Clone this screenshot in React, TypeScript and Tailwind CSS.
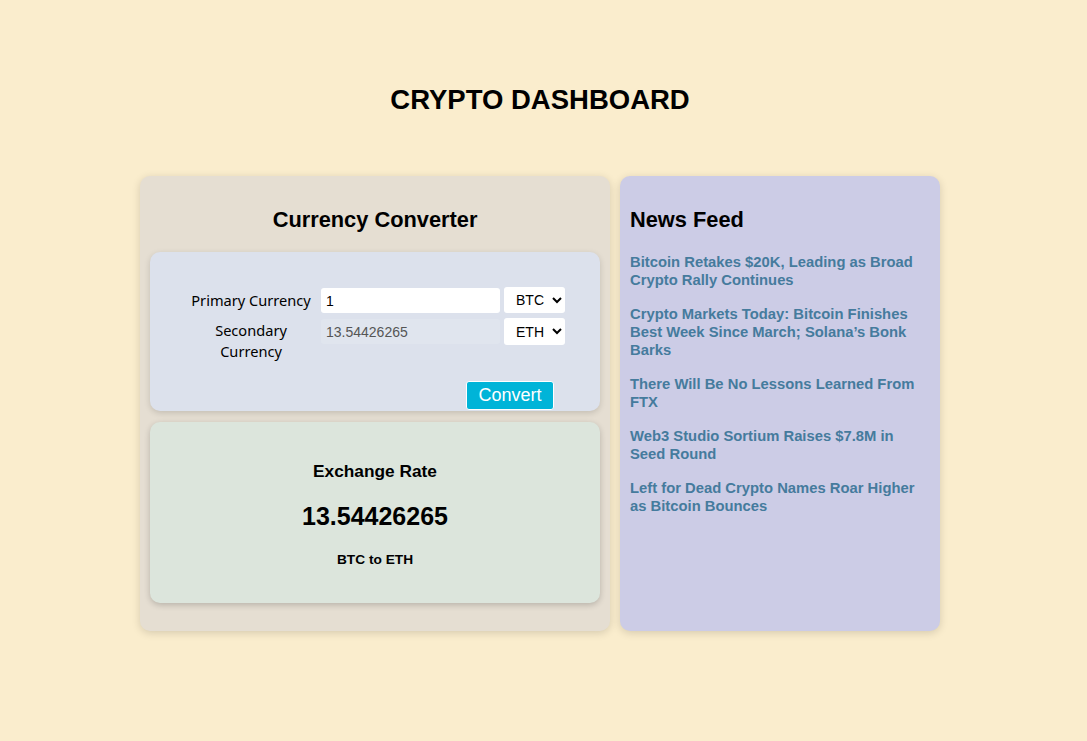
import React, { useState } from 'react'

const heading = "font-['Liberation_Sans','Arial',sans-serif] font-bold"

const news = [
  'Bitcoin Retakes $20K, Leading as Broad Crypto Rally Continues',
  'Crypto Markets Today: Bitcoin Finishes Best Week Since March; Solana’s Bonk Barks',
  'There Will Be No Lessons Learned From FTX',
  'Web3 Studio Sortium Raises $7.8M in Seed Round',
  'Left for Dead Crypto Names Roar Higher as Bitcoin Bounces',
]

const App = () => {
  const [amount, setAmount] = useState('1')
  const [primary, setPrimary] = useState('BTC')
  const [secondary, setSecondary] = useState('ETH')
  const rate = '13.54426265'

  return (
    <div className="min-h-screen w-full bg-[#faedcd] text-black pr-[7px]">
      <h1 className={`${heading} text-[27.5px] text-center pt-[82px] pb-[58px] leading-[36px]`}>CRYPTO DASHBOARD</h1>

      <div className="flex justify-center items-stretch gap-[10px]">
        {/* converter column */}
        <div className="w-[470px] h-[455px] bg-[#e5ded2] rounded-[10px] shadow-[0_2px_8px_rgba(0,0,0,0.15)] px-[10px] pt-[30px] flex flex-col">
          <h2 className={`${heading} text-[21.8px] text-center leading-[28px] mb-[18px]`}>Currency Converter</h2>

          <div className="bg-[#dce1ec] rounded-[10px] shadow-[0_2px_6px_rgba(0,0,0,0.15)] h-[159px] pt-[35px] flex flex-col">
            <div className="grid grid-cols-[132px_179px_61px] gap-x-[4px] gap-y-[5px] ml-[35px] items-start font-['Noto_Sans','Open_Sans',sans-serif] text-[14.6px]">
              <label className="text-center leading-[24px] pt-[1px]">Primary Currency</label>
              <input
                value={amount}
                onChange={e => setAmount(e.target.value)}
                className="h-[25px] mt-[1px] bg-white rounded-[3px] px-[5px] text-[14px] font-['Liberation_Sans',sans-serif] outline-none"
              />
              <select
                value={primary}
                onChange={e => setPrimary(e.target.value)}
                className="h-[26px] bg-white rounded-[3px] pl-[8px] text-[14px] font-['Liberation_Sans',sans-serif]"
              >
                <option>BTC</option>
                <option>ETH</option>
              </select>

              <label className="text-center leading-[21px] pt-[2px]">Secondary Currency</label>
              <input
                value={rate}
                disabled
                className="h-[25px] mt-[1px] bg-[#e0e5ee] rounded-[3px] px-[5px] text-[14px] text-[#555] font-['Liberation_Sans',sans-serif]"
              />
              <select
                value={secondary}
                onChange={e => setSecondary(e.target.value)}
                className="h-[27px] bg-white rounded-[3px] pl-[8px] text-[14px] font-['Liberation_Sans',sans-serif]"
              >
                <option>ETH</option>
                <option>BTC</option>
              </select>
            </div>
            <div className="flex justify-end pr-[46px] mt-auto mb-[1px]">
              <button className="bg-[#00b4d8] text-white border border-white rounded-[3px] w-[88px] h-[29px] text-[18px] font-['Liberation_Sans',sans-serif]">
                Convert
              </button>
            </div>
          </div>

          <div className="bg-[#dce5dc] rounded-[10px] shadow-[0_2px_6px_rgba(0,0,0,0.2)] h-[181px] mt-[11px] flex flex-col items-center pt-[37px]">
            <h3 className={`${heading} text-[17.3px] leading-[24px]`}>Exchange Rate</h3>
            <p className={`${heading} text-[25px] leading-[30px] mt-[18px]`}>{rate}</p>
            <p className={`${heading} text-[13.7px] leading-[18px] mt-[20px]`}>{primary} to {secondary}</p>
          </div>
        </div>

        {/* news column */}
        <div className="w-[320px] h-[455px] bg-[#cccce6] rounded-[10px] shadow-[0_2px_8px_rgba(0,0,0,0.15)] px-[10px] pt-[30px]">
          <h2 className={`${heading} text-[21.8px] leading-[28px] mb-[19px]`}>News Feed</h2>
          <div className="flex flex-col gap-[16px]">
            {news.map(n => (
              <a key={n} href="#" className={`${heading} text-[14.8px] leading-[18px] text-[#457b9d] block`}>{n}</a>
            ))}
          </div>
        </div>
      </div>
    </div>
  )
}

export default App
